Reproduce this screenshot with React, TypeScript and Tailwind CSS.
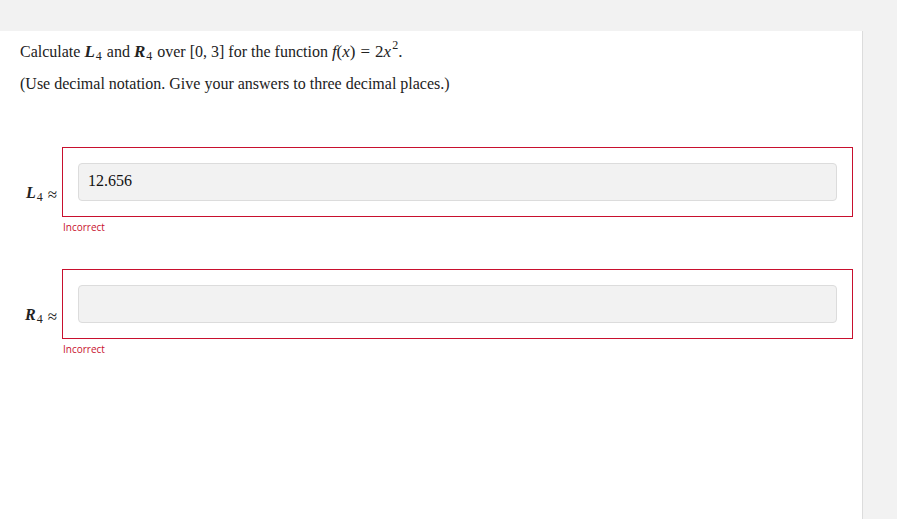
import React from 'react';

const serif = { fontFamily: '"Liberation Serif", "Times New Roman", serif' };

function Sub({ base, sub, size = 'text-[17px]' }: { base: string; sub: string; size?: string }) {
  return (
    <span className={size}>
      <span className="italic font-bold">{base}</span>
      <span className="relative top-[3px] text-[12px] ml-[1px] mr-[1px]">{sub}</span>
    </span>
  );
}

function AnswerRow({ label, value }: { label: React.ReactNode; value: string }) {
  return (
    <div className="flex">
      <div className="w-[62px] shrink-0 flex justify-end items-end pr-[5px] pb-[12px] h-[70px] text-[16px] text-[#222]">
        {label}
        <span className="ml-[4px] text-[17px] leading-[20px]">≈</span>
      </div>
      <div>
        <div className="w-[791px] h-[70px] border border-[#c8102e] p-[15px]">
          <div className="h-[38px] rounded-[4px] border border-[#dcdcdc] bg-[#f2f2f2] pl-[9px] pt-[7px] text-[16px] text-[#111] leading-[20px]">
            {value}
          </div>
        </div>
        <div
          className="pl-[1px] pt-[4px] text-[10px] leading-[13px] text-[#c8102e]"
          style={{ fontFamily: '"Open Sans", "Noto Sans", sans-serif' }}
        >
          Incorrect
        </div>
      </div>
    </div>
  );
}

export default function App() {
  return (
    <div className="h-[519px] w-[897px] bg-[#f2f2f2] pt-[31px] overflow-hidden" style={serif}>
      <div className="h-full w-[863px] bg-white border-r border-[#dcdcdc]">
        <div className="pl-[20px] pt-[11px] text-[16px] text-[#222]">
          <p className="leading-[20px]">
            Calculate <Sub base="L" sub="4" /> and <Sub base="R" sub="4" /> over [0, 3] for the function{' '}
            <span className="text-[17px]">
              <span className="italic">f</span>(<span className="italic">x</span>)
              <span className="mx-[5px]">=</span>2<span className="italic">x</span>
              <span className="relative top-[-8px] text-[12px] ml-[1px]">2</span>.
            </span>
          </p>
          <p className="mt-[11px] leading-[20px]">
            (Use decimal notation. Give your answers to three decimal places.)
          </p>
        </div>
        <div className="mt-[53px] flex flex-col gap-[35px]">
          <AnswerRow label={<Sub base="L" sub="4" size="text-[16px]" />} value="12.656" />
          <AnswerRow label={<Sub base="R" sub="4" size="text-[16px]" />} value="" />
        </div>
      </div>
    </div>
  );
}
